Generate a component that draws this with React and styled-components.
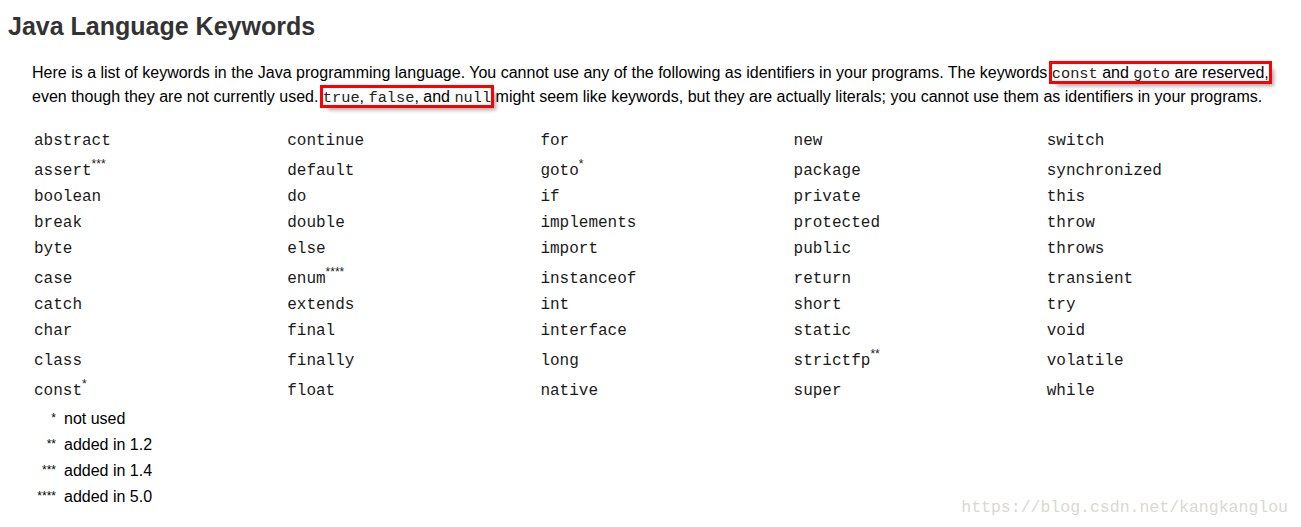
import { createGlobalStyle, styled } from "styled-components";

const GlobalStyle = createGlobalStyle`
  body {
    margin: 0;
    background: #fff;
    font-family: "Liberation Sans", Arial, sans-serif;
    color: #000;
  }
`;

const Page = styled.div`
  padding: 11px 8px 0;
  min-height: 516px;
`;

const Title = styled.h2`
  margin: 0;
  font-size: 25px;
  line-height: 30px;
  font-weight: bold;
  color: #333;
`;

const Intro = styled.p`
  margin: 20px 0 19px 24px;
  max-width: 1262px;
  font-size: 16px;
  line-height: 24px;
`;

const Code = styled.code`
  font-family: "Liberation Mono", "Courier New", monospace;
  font-size: 15.3px;
  line-height: 1;
  color: #222;
`;

const Marked = styled.span`
  outline: 3px solid #f00;
  outline-offset: 0;
  box-shadow: 5px 5px 4px rgba(0, 0, 0, 0.35);
`;

const KeywordTable = styled.table`
  margin-left: 24px;
  width: 1266px;
  border-collapse: collapse;
  table-layout: fixed;
`;

const Cell = styled.td`
  width: 20%;
  padding: 4px 2px;
  font-family: "Liberation Mono", "Courier New", monospace;
  font-size: 16px;
  line-height: 18px;
  color: #1a1a1a;
  vertical-align: baseline;
`;

const Note = styled.sup`
  font-family: "Liberation Sans", Arial, sans-serif;
  font-size: 12px;
  line-height: 12px;
  vertical-align: 7px;
`;

const Footnotes = styled.div`
  margin: 2px 0 0 24px;
`;

const FootnoteRow = styled.div`
  font-size: 16px;
  line-height: 26px;
`;

const Mark = styled.span`
  display: inline-block;
  width: 24px;
  margin-right: 8px;
  text-align: right;
  font-size: 12px;
  line-height: 1;
  vertical-align: 2px;
`;

const Watermark = styled.div`
  position: absolute;
  top: 500px;
  right: 13px;
  font-family: "Liberation Mono", "Courier New", monospace;
  font-size: 16.5px;
  line-height: 1;
  color: #d9d9d1;
  white-space: nowrap;
`;

const rows = [
  ["abstract", "continue", "for", "new", "switch"],
  ["assert|***", "default", "goto|*", "package", "synchronized"],
  ["boolean", "do", "if", "private", "this"],
  ["break", "double", "implements", "protected", "throw"],
  ["byte", "else", "import", "public", "throws"],
  ["case", "enum|****", "instanceof", "return", "transient"],
  ["catch", "extends", "int", "short", "try"],
  ["char", "final", "interface", "static", "void"],
  ["class", "finally", "long", "strictfp|**", "volatile"],
  ["const|*", "float", "native", "super", "while"],
];

const notes = [
  ["*", "not used"],
  ["**", "added in 1.2"],
  ["***", "added in 1.4"],
  ["****", "added in 5.0"],
];

function Keyword({ value }) {
  const [word, note] = value.split("|");
  return (
    <Cell>
      {word}
      {note && <Note>{note}</Note>}
    </Cell>
  );
}

export default function App() {
  return (
    <Page>
      <GlobalStyle />
      <Title>Java Language Keywords</Title>
      <Intro>
        Here is a list of keywords in the Java programming language. You cannot use any of the following as
        identifiers in your programs. The keywords{" "}
        <Marked>
          <Code>const</Code> and <Code>goto</Code> are reserved,
        </Marked>{" "}
        even though they are not currently used.{" "}
        <Marked>
          <Code>true</Code>, <Code>false</Code>, and <Code>null</Code>
        </Marked>{" "}
        might seem like keywords, but they are actually literals; you cannot use them as identifiers in your
        programs.
      </Intro>
      <KeywordTable>
        <tbody>
          {rows.map((row, i) => (
            <tr key={i}>
              {row.map((kw) => (
                <Keyword key={kw} value={kw} />
              ))}
            </tr>
          ))}
        </tbody>
      </KeywordTable>
      <Footnotes>
        {notes.map(([mark, text]) => (
          <FootnoteRow key={mark}>
            <Mark>{mark}</Mark>
            {text}
          </FootnoteRow>
        ))}
      </Footnotes>
      <Watermark>https://blog.csdn.net/kangkanglou</Watermark>
    </Page>
  );
}
